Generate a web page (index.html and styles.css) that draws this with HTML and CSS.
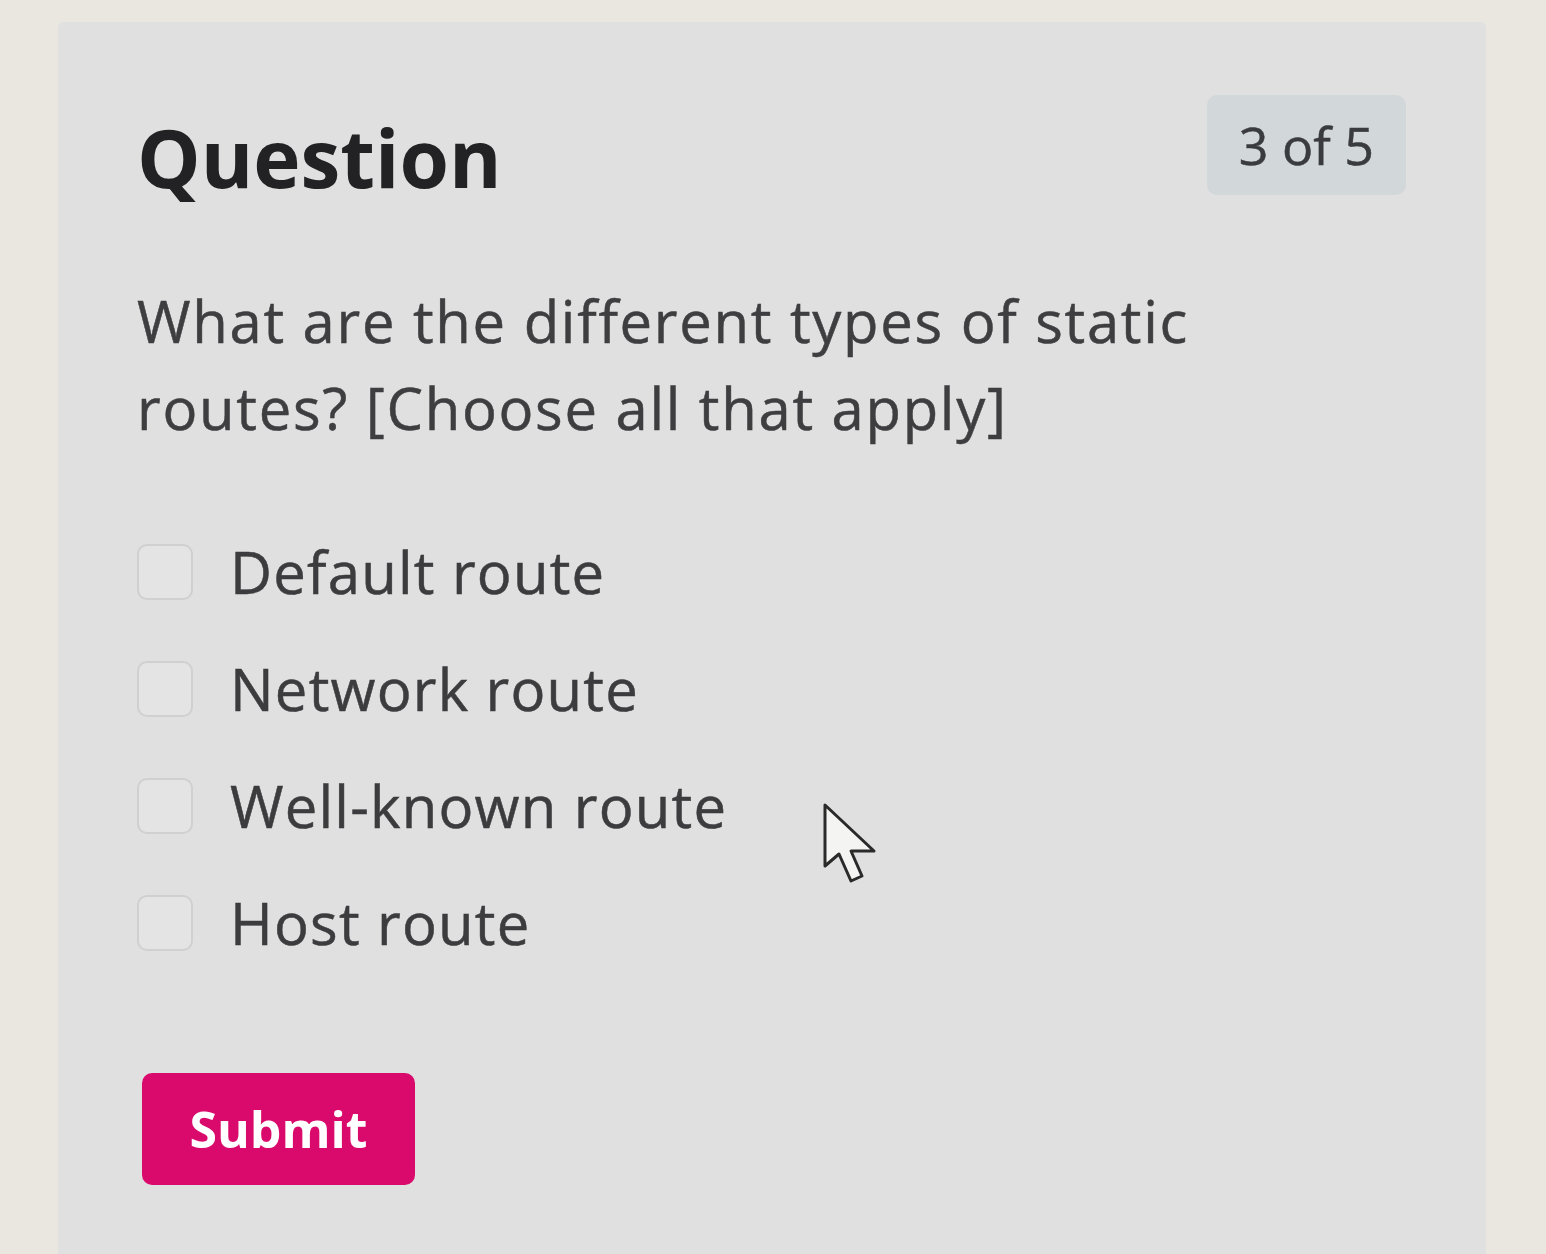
FILE: index.html
```html
<!DOCTYPE html>
<html lang="en">
<head>
  <meta charset="UTF-8">
  <meta name="viewport" content="width=device-width, initial-scale=1.0">
  <title>Quiz Question</title>
  <link rel="stylesheet" href="styles.css">
</head>
<body>
  <div class="card">
    <div class="card-header">
      <h1>Question</h1>
      <span class="counter">3 of 5</span>
    </div>

    <p class="prompt">What are the different types of static routes? [Choose all that apply]</p>

    <ul class="options">
      <li><label><span class="box"></span>Default route</label></li>
      <li><label><span class="box"></span>Network route</label></li>
      <li><label><span class="box"></span>Well-known route</label></li>
      <li><label><span class="box"></span>Host route</label></li>
    </ul>

    <button class="submit">Submit</button>

    <!-- mouse pointer -->
    <svg class="pointer" width="60" height="84" viewBox="0 0 60 84">
      <path d="M3 3 L3 64 L17 52 L29 79 L40 74 L29 49 L52 49 Z" fill="#f4f4f2" stroke="#2a2a2a" stroke-width="3" stroke-linejoin="round"/>
    </svg>
  </div>
</body>
</html>
```

FILE: styles.css
```css
body {
  margin: 0;
  padding: 0;
  background: #e9e7e0;
  font-family: "Open Sans", "Lato", sans-serif;
  color: #3a3a3c;
  overflow: hidden;
}
.card {
  position: relative;
  margin: 22px 0 0 58px;
  width: 1428px;
  height: 1300px;
  box-sizing: border-box;
  padding: 95px 80px 0 79px;
  background: #dfe0df;
  border-radius: 6px;
}
.card-header {
  display: flex;
  justify-content: space-between;
  align-items: flex-start;
}
h1 {
  margin: 0;
  font-size: 80px;
  font-weight: 700;
  line-height: 80px;
  color: #222224;
}
.counter {
  display: block;
  margin-top: -22px;
  padding: 20px 32px;
  background: #d2d7da;
  border-radius: 10px;
  font-size: 52px;
  line-height: 60px;
  color: #3a3b3e;
  -webkit-text-stroke: 0.5px #3a3b3e;
}
.prompt {
  margin: 80px 0 0;
  width: 1100px;
  font-size: 58px;
  line-height: 87px;
  letter-spacing: 1.7px;
  color: #3e3e40;
  -webkit-text-stroke: 0.5px #3e3e40;
}
.options {
  list-style: none;
  margin: 91px 0 0;
  padding: 0;
}
.options li {
  height: 117px;
}
.options label {
  display: flex;
  align-items: center;
  gap: 37px;
  font-size: 58px;
  line-height: 60px;
  letter-spacing: 1.2px;
  color: #3c3c3e;
  -webkit-text-stroke: 0.5px #3c3c3e;
}
.box {
  flex: none;
  width: 52px;
  height: 52px;
  border: 2px solid #cfd0cf;
  border-radius: 10px;
  background: #e3e4e3;
}
.submit {
  display: block;
  margin-top: 63px;
  margin-left: 5px;
  width: 273px;
  height: 112px;
  padding: 0;
  background: #d90a6b;
  color: #fff;
  border: none;
  border-radius: 10px;
  font-family: inherit;
  font-size: 50px;
  font-weight: 700;
  cursor: pointer;
}
.pointer {
  position: absolute;
  left: 764px;
  top: 780px;
}
```
